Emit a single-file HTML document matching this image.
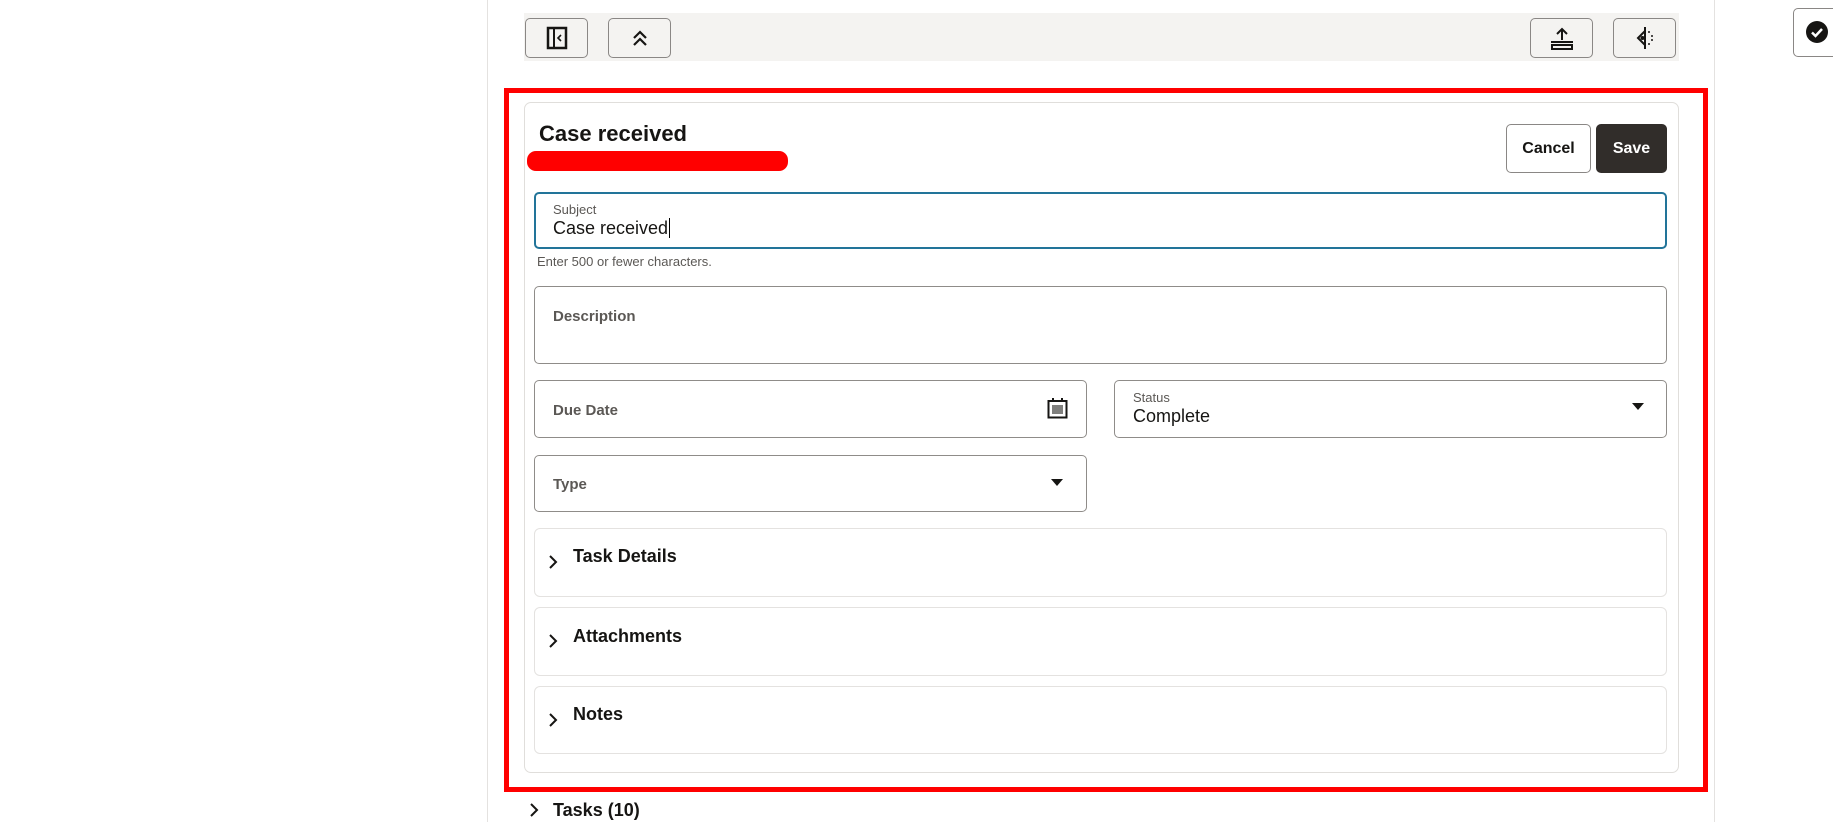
<!DOCTYPE html>
<html><head><meta charset="utf-8"><style>
*{box-sizing:border-box;margin:0;padding:0}
body{width:1833px;height:822px;background:#fff;position:relative;overflow:hidden;font-family:"Liberation Sans",sans-serif;color:#161513}
.a{position:absolute}
.vl{position:absolute;top:0;width:1px;height:822px;background:#e4e2e0}
.tb{left:524px;top:13px;width:1155px;height:48px;background:#f4f3f1}
.ib{width:63px;height:40px;border:1px solid #8a8785;border-radius:5px;background:#f4f3f1;display:flex;align-items:center;justify-content:center}
.fld{border:1px solid #8f8c89;border-radius:5px;background:#fff}
.lbl{position:absolute;font-size:14px;color:#5b5855}
.plab{position:absolute;font-size:15px;color:#5b5855;font-weight:bold}
.pan{position:absolute;left:534px;width:1133px;border:1px solid #e4e2e0;border-radius:6px}
.pan b{position:absolute;left:38px;font-size:18px}
.chev{position:absolute;left:12px}
</style></head><body>
<div class="vl" style="left:487px"></div>
<div class="vl" style="left:1714px"></div>
<div class="a tb"></div>
<div class="a ib" style="left:525px;top:18px"><svg width="22" height="24" viewBox="0 0 22 24"><rect x="2" y="2" width="18" height="20" fill="none" stroke="#161513" stroke-width="2.5"/><line x1="8" y1="2" x2="8" y2="22" stroke="#161513" stroke-width="2"/><path d="M15 9 L12 12 L15 15" fill="none" stroke="#161513" stroke-width="1.6"/></svg></div>
<div class="a ib" style="left:608px;top:18px"><svg width="18" height="20" viewBox="0 0 18 20"><path d="M3 10 L9 4 L15 10 M3 17 L9 11 L15 17" fill="none" stroke="#161513" stroke-width="2.2"/></svg></div>
<div class="a ib" style="left:1530px;top:18px"><svg width="26" height="26" viewBox="0 0 26 26"><path d="M13 15 V4 M8 9 L13 4 L18 9" fill="none" stroke="#161513" stroke-width="2"/><line x1="2" y1="17" x2="24" y2="17" stroke="#161513" stroke-width="2"/><rect x="3" y="20" width="20" height="4" fill="none" stroke="#161513" stroke-width="2"/></svg></div>
<div class="a ib" style="left:1613px;top:18px"><svg width="24" height="26" viewBox="0 0 24 26"><line x1="12" y1="2" x2="12" y2="24" stroke="#161513" stroke-width="2"/><path d="M12 6 L5 13 L12 20" fill="none" stroke="#161513" stroke-width="2"/><circle cx="9.5" cy="13" r="2" fill="#161513"/><circle cx="16" cy="7" r="1" fill="#161513"/><circle cx="19" cy="11" r="1" fill="#161513"/><circle cx="19" cy="15" r="1" fill="#161513"/><circle cx="16" cy="19" r="1" fill="#161513"/></svg></div>
<div class="a" style="left:1793px;top:8px;width:50px;height:49px;border:1px solid #8a8785;border-radius:5px;background:#fff"></div>
<svg class="a" style="left:1805px;top:20px" width="24" height="24" viewBox="0 0 24 24"><circle cx="12" cy="12" r="11" fill="#161513"/><path d="M7 12.5 L10.5 16 L17 9" fill="none" stroke="#fff" stroke-width="2.5"/></svg>

<div class="a" style="left:524px;top:102px;width:1155px;height:671px;border:1px solid #e0dedb;border-radius:7px"></div>
<div class="a" style="left:504px;top:88px;width:1204px;height:704px;border:5px solid #ff0000"></div>

<div class="a" style="left:539px;top:121px;font-size:22px;font-weight:bold">Case received</div>
<div class="a" style="left:527px;top:151px;width:261px;height:20px;background:#ff0000;border-radius:9px"></div>
<div class="a" style="left:1506px;top:124px;width:85px;height:49px;border:1px solid #8a8785;border-radius:5px;background:#fff;font-size:16px;font-weight:bold;display:flex;align-items:center;justify-content:center">Cancel</div>
<div class="a" style="left:1596px;top:124px;width:71px;height:49px;border-radius:5px;background:#312d2a;color:#fff;font-size:16px;font-weight:bold;display:flex;align-items:center;justify-content:center">Save</div>

<div class="a fld" style="left:534px;top:192px;width:1133px;height:57px;border:2px solid #227499"></div>
<div class="lbl" style="left:553px;top:202px;font-size:13px">Subject</div>
<div class="a" style="left:553px;top:218px;font-size:18px">Case received<span style="border-left:1px solid #000;margin-left:1px"></span></div>
<div class="a" style="left:537px;top:254px;font-size:13px;color:#5b5855">Enter 500 or fewer characters.</div>

<div class="a fld" style="left:534px;top:286px;width:1133px;height:78px"></div>
<div class="plab" style="left:553px;top:308px">Description</div>

<div class="a fld" style="left:534px;top:380px;width:553px;height:58px"></div>
<div class="plab" style="left:553px;top:402px">Due Date</div>
<svg class="a" style="left:1047px;top:397px" width="21" height="22" viewBox="0 0 21 22"><rect x="1.5" y="4" width="18" height="16.5" fill="none" stroke="#161513" stroke-width="2"/><line x1="6" y1="1" x2="6" y2="5" stroke="#161513" stroke-width="2"/><line x1="15" y1="1" x2="15" y2="5" stroke="#161513" stroke-width="2"/><rect x="5" y="8" width="11" height="9" fill="#161513" opacity="0.55"/></svg>

<div class="a fld" style="left:1114px;top:380px;width:553px;height:58px"></div>
<div class="lbl" style="left:1133px;top:390px;font-size:13px">Status</div>
<div class="a" style="left:1133px;top:406px;font-size:18px">Complete</div>
<svg class="a" style="left:1632px;top:403px" width="12" height="8"><path d="M0 0 H12 L6 7Z" fill="#161513"/></svg>

<div class="a fld" style="left:534px;top:455px;width:553px;height:57px"></div>
<div class="plab" style="left:553px;top:476px">Type</div>
<svg class="a" style="left:1051px;top:479px" width="12" height="8"><path d="M0 0 H12 L6 7Z" fill="#161513"/></svg>

<div class="pan" style="top:528px;height:69px"><svg class="chev" style="top:25px" width="12" height="16"><path d="M3 2 L9 8 L3 14" fill="none" stroke="#161513" stroke-width="2"/></svg><b style="top:17px">Task Details</b></div>
<div class="pan" style="top:607px;height:69px"><svg class="chev" style="top:25px" width="12" height="16"><path d="M3 2 L9 8 L3 14" fill="none" stroke="#161513" stroke-width="2"/></svg><b style="top:18px">Attachments</b></div>
<div class="pan" style="top:686px;height:68px"><svg class="chev" style="top:25px" width="12" height="16"><path d="M3 2 L9 8 L3 14" fill="none" stroke="#161513" stroke-width="2"/></svg><b style="top:17px">Notes</b></div>

<svg class="a" style="left:528px;top:802px" width="12" height="16"><path d="M3 2 L9 8 L3 14" fill="none" stroke="#161513" stroke-width="2"/></svg>
<div class="a" style="left:553px;top:800px;font-size:18px;font-weight:bold">Tasks (10)</div>
</body></html>
